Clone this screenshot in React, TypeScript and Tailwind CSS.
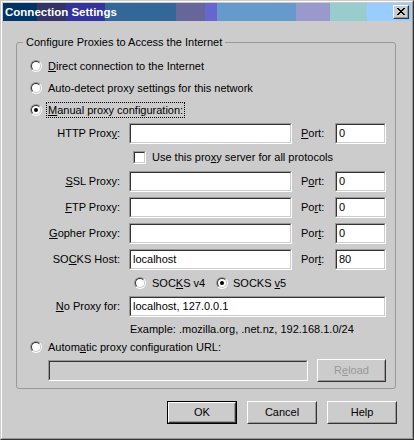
import React from "react";

function Radio({ on }: { on?: boolean }) {
  return (
    <div className="w-[12px] h-[12px] shrink-0 rounded-full border border-t-[#999999] border-l-[#999999] border-b-white border-r-white">
      <div className="h-full rounded-full border border-t-[#333333] border-l-[#333333] border-b-[#cccccc] border-r-[#cccccc] bg-white flex items-center justify-center">
        {on && <div className="w-[4px] h-[4px] rounded-full bg-black" />}
      </div>
    </div>
  );
}

function Check() {
  return (
    <div className="w-[13px] h-[13px] shrink-0 border border-t-[#999999] border-l-[#999999] border-b-white border-r-white">
      <div className="h-full border border-t-[#333333] border-l-[#333333] border-b-[#cccccc] border-r-[#cccccc] bg-white" />
    </div>
  );
}

function Field({ w, value, disabled }: { w: string; value?: string; disabled?: boolean }) {
  return (
    <div className={`${w} h-[21px] shrink-0 border border-t-[#999999] border-l-[#999999] border-b-white border-r-white`}>
      <div
        className={`h-full border border-t-[#333333] border-l-[#333333] border-b-[#cccccc] border-r-[#cccccc] ${
          disabled ? "bg-[#cccccc]" : "bg-white"
        } flex items-center pl-[2px] whitespace-nowrap overflow-hidden`}
      >
        {value}
      </div>
    </div>
  );
}

function Btn({
  children,
  def,
  disabled,
  w,
}: {
  children: React.ReactNode;
  def?: boolean;
  disabled?: boolean;
  w: string;
}) {
  if (def) {
    return (
      <div className={`${w} h-[23px] shrink-0 border border-black`}>
        <div className="h-full border border-t-white border-l-white border-b-[#333333] border-r-[#333333]">
          <div className="h-full border border-t-[#cccccc] border-l-[#cccccc] border-b-[#999999] border-r-[#999999] flex items-center justify-center">
            {children}
          </div>
        </div>
      </div>
    );
  }
  return (
    <div className={`${w} h-[23px] shrink-0 border border-t-white border-l-white border-b-[#333333] border-r-[#333333]`}>
      <div
        className={`h-full border border-t-[#cccccc] border-l-[#cccccc] border-b-[#999999] border-r-[#999999] flex items-center justify-center ${
          disabled ? "text-[#999999]" : ""
        }`}
      >
        {children}
      </div>
    </div>
  );
}

function ProxyRow({
  label,
  value,
  portLabel,
  port,
}: {
  label: React.ReactNode;
  value?: string;
  portLabel: React.ReactNode;
  port: string;
}) {
  return (
    <div className="h-[21px] flex items-center">
      <div className="w-[103px] text-right whitespace-nowrap">{label}</div>
      <div className="ml-[9px]">
        <Field w="w-[163px]" value={value} />
      </div>
      <div className="ml-[9px] w-[34px] whitespace-nowrap">{portLabel}</div>
      <Field w="w-[51px]" value={port} />
    </div>
  );
}

export default function App() {
  return (
    <div className="w-[414px] h-[440px] bg-[#cccccc] font-['Liberation_Sans',Arial,sans-serif] text-[11px] leading-[13px] text-black border border-t-[#cccccc] border-l-[#cccccc] border-b-[#333333] border-r-[#333333]">
      <div className="h-full border border-t-white border-l-white border-b-[#999999] border-r-[#999999] p-px flex flex-col">
        {/* Title bar */}
        <div className="h-[18px] shrink-0 flex items-center justify-between bg-[linear-gradient(90deg,#003366_0px_34px,#333366_34px_63px,#333399_63px_102px,#336699_102px_173px,#666699_173px_202px,#6666cc_202px_214px,#6699cc_214px_293px,#9999cc_293px_327px,#99cccc_327px_364px,#99ccff_364px_408px)]">
          <div className="pl-[2px] text-white font-bold text-[11.5px] leading-[16px] whitespace-nowrap">
            Connection Settings
          </div>
          <div className="mr-[2px] w-[16px] h-[14px] border border-t-white border-l-white border-b-[#333333] border-r-[#333333] bg-[#cccccc]">
            <div className="h-full border border-t-[#cccccc] border-l-[#cccccc] border-b-[#999999] border-r-[#999999] flex items-center justify-center">
              <svg width="8" height="7" viewBox="0 0 8 7" shapeRendering="crispEdges" className="-mt-px -ml-px">
                <path
                  d="M0 0h2v1H0zM6 0h2v1H6zM1 1h2v1H1zM5 1h2v1H5zM2 2h4v1H2zM3 3h2v1H3zM2 4h4v1H2zM1 5h2v1H1zM5 5h2v1H5zM0 6h2v1H0zM6 6h2v1H6z"
                  fill="#000"
                />
              </svg>
            </div>
          </div>
        </div>

        {/* Client */}
        <div className="flex flex-col">
          <fieldset className="ml-[13px] mt-[15px] w-[380px] border border-[#999999] rounded-[3px] pt-[6px] pb-[6px]">
            <legend className="ml-[6px] px-[3px] leading-[13px] whitespace-nowrap">
              Configure Proxies to Access the Internet
            </legend>
            <div className="flex flex-col">
              <div className="h-[22px] flex items-center pl-[13px]">
                <Radio />
                <span className="ml-[6px] whitespace-nowrap">
                  <u>D</u>irect connection to the Internet
                </span>
              </div>
              <div className="h-[22px] flex items-center pl-[13px]">
                <Radio />
                <span className="ml-[6px] whitespace-nowrap">Auto-detect proxy settings for this network</span>
              </div>
              <div className="h-[22px] flex items-center pl-[13px]">
                <Radio on />
                <span className="ml-[4px] px-px border border-dotted border-black leading-[14px] whitespace-nowrap">
                  <u>M</u>anual proxy configuration:
                </span>
              </div>

              <div className="mt-[2px]">
                <ProxyRow
                  label={
                    <>
                      HTTP Prox<u>y</u>:
                    </>
                  }
                  portLabel={
                    <>
                      <u>P</u>ort:
                    </>
                  }
                  port="0"
                />
              </div>
              <div className="h-[27px] flex items-center pl-[116px]">
                <Check />
                <span className="ml-[6px] whitespace-nowrap">
                  Use this pro<u>x</u>y server for all protocols
                </span>
              </div>
              <ProxyRow
                label={
                  <>
                    <u>S</u>SL Proxy:
                  </>
                }
                portLabel={
                  <>
                    P<u>o</u>rt:
                  </>
                }
                port="0"
              />
              <div className="mt-[5px]">
                <ProxyRow
                  label={
                    <>
                      <u>F</u>TP Proxy:
                    </>
                  }
                  portLabel={
                    <>
                      Po<u>r</u>t:
                    </>
                  }
                  port="0"
                />
              </div>
              <div className="mt-[5px]">
                <ProxyRow
                  label={
                    <>
                      <u>G</u>opher Proxy:
                    </>
                  }
                  portLabel={
                    <>
                      Por<u>t</u>:
                    </>
                  }
                  port="0"
                />
              </div>
              <div className="mt-[5px]">
                <ProxyRow
                  label={
                    <>
                      SO<u>C</u>KS Host:
                    </>
                  }
                  value="localhost"
                  portLabel={
                    <>
                      Por<u>t</u>:
                    </>
                  }
                  port="80"
                />
              </div>
              <div className="h-[26px] flex items-center pl-[117px]">
                <div className="w-[82px] flex items-center">
                  <Radio />
                  <span className="ml-[6px] whitespace-nowrap">
                    SOC<u>K</u>S v4
                  </span>
                </div>
                <div className="flex items-center">
                  <Radio on />
                  <span className="ml-[5px] whitespace-nowrap">
                    SOCKS <u>v</u>5
                  </span>
                </div>
              </div>
              <div className="h-[21px] flex items-center">
                <div className="w-[103px] text-right whitespace-nowrap">
                  <u>N</u>o Proxy for:
                </div>
                <div className="ml-[9px]">
                  <Field w="w-[257px]" value="localhost, 127.0.0.1" />
                </div>
              </div>
              <div className="h-[24px] flex items-center pl-[113px] whitespace-nowrap">
                Example: .mozilla.org, .net.nz, 192.168.1.0/24
              </div>
              <div className="h-[12px] flex items-center pl-[13px]">
                <Radio />
                <span className="ml-[6px] whitespace-nowrap">
                  Autom<u>a</u>tic proxy configuration URL:
                </span>
              </div>
              <div className="mt-[6px] h-[23px] flex items-center pl-[31px]">
                <Field w="w-[260px]" disabled />
                <div className="ml-[9px]">
                  <Btn w="w-[69px]" disabled>
                    R<u>e</u>load
                  </Btn>
                </div>
              </div>
            </div>
          </fieldset>

          <div className="mt-[12px] mr-[14px] flex justify-end gap-[10px]">
            <Btn w="w-[70px]" def>
              OK
            </Btn>
            <Btn w="w-[70px]">Cancel</Btn>
            <Btn w="w-[70px]">Help</Btn>
          </div>
        </div>
      </div>
    </div>
  );
}
